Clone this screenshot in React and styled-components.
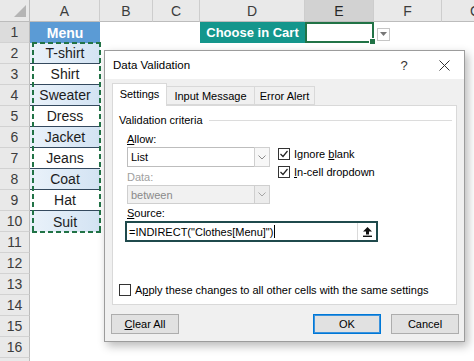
import React from "react";
import styled, { createGlobalStyle, css } from "styled-components";

const GlobalStyle = createGlobalStyle`
  html, body { margin: 0; padding: 0; background: #fff; }
  body { font-family: "Liberation Sans", Arial, sans-serif; }
`;

const Screen = styled.div`
  position: relative;
  width: 474px;
  height: 361px;
  overflow: hidden;
  background: #fff;
`;

/* ---------- spreadsheet ---------- */

const Sheet = styled.div`
  display: grid;
  grid-template-columns: 30px 70px 53px 47px 105px 69px 68px 68px;
  grid-template-rows: 22px repeat(17, 21px);
  font-size: 14px;
  color: #222;
`;

// every sheet cell sits at its own row/column so the copy marquee can overlap
const at = css`
  grid-row: ${(p) => p.$r};
  grid-column: ${(p) => p.$c};
`;

const Corner = styled.div`
  ${at}
  background: #e9e9e9;
  border-right: 1px solid #bcbcbc;
  border-bottom: 1px solid #bcbcbc;
  box-sizing: border-box;
  display: flex;
  align-items: flex-end;
  justify-content: flex-end;
  padding: 0 3px 4px 0;
`;

const ColHead = styled.div`
  ${at}
  display: flex;
  align-items: center;
  justify-content: center;
  box-sizing: border-box;
  background: ${(p) => (p.$active ? "#d2d2d2" : "#e9e9e9")};
  color: ${(p) => (p.$active ? "#262626" : "#3c3c3c")};
  border-right: 1px solid #cdcdcd;
  border-bottom: 1px solid #bcbcbc;
`;

const RowHead = styled.div`
  ${at}
  display: flex;
  align-items: center;
  justify-content: center;
  box-sizing: border-box;
  background: ${(p) => (p.$active ? "#dcdcdc" : "#e9e9e9")};
  color: #3c3c3c;
  border-right: 1px solid #bcbcbc;
  border-bottom: 1px solid #d2d2d2;
`;

const Blank = styled.div`
  ${at}
  background: #fff;
  display: flex;
  align-items: center;
`;

const MenuHead = styled.div`
  ${at}
  background: #5b9bd5;
  color: #fff;
  font-weight: bold;
  display: flex;
  align-items: center;
  justify-content: center;
`;

const Item = styled.div`
  ${at}
  display: flex;
  align-items: center;
  justify-content: center;
  box-sizing: border-box;
  background: ${(p) =>
    p.$band ? "linear-gradient(90deg, #eaf2fa, #d3e3f3)" : "#fff"};
  border-bottom: ${(p) => (p.$last ? "none" : "1px solid #34495e")};
  color: #1c1c1c;
`;

const TitleCell = styled.div`
  ${at}
  background: #14968c;
  color: #fff;
  font-weight: bold;
  font-size: 13px;
  display: flex;
  align-items: center;
  justify-content: center;
`;

const SelectedCell = styled.div`
  ${at}
  position: relative;
  box-sizing: border-box;
  border: 2px solid #217346;
  background: #fff;
  &::after {
    content: "";
    position: absolute;
    right: -4px;
    bottom: -4px;
    width: 5px;
    height: 5px;
    background: #217346;
    border: 1px solid #fff;
  }
`;

const DropButton = styled.div`
  margin: 3px 0 0 3px;
  width: 13px;
  height: 13px;
  box-sizing: border-box;
  border: 1px solid #c6c6c6;
  background: #fff;
  display: flex;
  align-items: center;
  justify-content: center;
`;

const Ants = styled.div`
  grid-column: 2 / 3;
  grid-row: 3 / 12;
  margin: -1px -1px -1px 2px;
  pointer-events: none;
  background:
    linear-gradient(90deg, #217346 62%, transparent 0) top left / 8px 2px repeat-x,
    linear-gradient(90deg, #217346 62%, transparent 0) bottom left / 8px 2px repeat-x,
    linear-gradient(180deg, #217346 62%, transparent 0) top left / 2px 8px repeat-y,
    linear-gradient(180deg, #217346 62%, transparent 0) top right / 2px 8px repeat-y;
`;

/* ---------- dialog ---------- */

const Dialog = styled.div`
  position: absolute;
  left: 104px;
  top: 50px;
  width: 361px;
  height: 292px;
  box-sizing: border-box;
  background: #f0f0f0;
  border: 1px solid #9c9c9c;
  box-shadow: 3px 4px 9px rgba(0, 0, 0, 0.28);
  display: flex;
  flex-direction: column;
  font-family: "Liberation Sans", Arial, sans-serif;
  font-size: 11px;
  color: #000;
`;

const TitleBar = styled.div`
  height: 28px;
  background: #fff;
  display: flex;
  align-items: center;
  padding-left: 8px;
  font-size: 11.5px;
`;

const TitleText = styled.div`
  flex: 1;
`;

const TitleButton = styled.div`
  width: 40px;
  height: 28px;
  display: flex;
  align-items: center;
  justify-content: center;
  font-size: 13px;
  color: #333;
`;

const Body = styled.div`
  padding: 4px 7px 0 7px;
  display: flex;
  flex-direction: column;
`;

const TabRow = styled.div`
  display: flex;
  align-items: flex-end;
  height: 22px;
  position: relative;
  z-index: 1;
`;

const Tab = styled.div`
  width: ${(p) => p.$w}px;
  height: ${(p) => (p.$active ? 23 : 19)}px;
  box-sizing: border-box;
  display: flex;
  align-items: center;
  justify-content: center;
  padding-bottom: ${(p) => (p.$active ? 2 : 0)}px;
  background: ${(p) => (p.$active ? "#fff" : "#f0f0f0")};
  border: 1px solid #d9d9d9;
  border-bottom: ${(p) => (p.$active ? "none" : "1px solid #d9d9d9")};
  margin-bottom: ${(p) => (p.$active ? -1 : 0)}px;
  margin-left: ${(p) => (p.$active ? 0 : -1)}px;
`;

const Page = styled.div`
  height: 200px;
  box-sizing: border-box;
  background: #fff;
  border: 1px solid #d9d9d9;
  display: flex;
  flex-direction: column;
`;

const GroupHead = styled.div`
  display: flex;
  align-items: center;
  margin: 7px 4px 0 6px;
  height: 14px;
  &::after {
    content: "";
    flex: 1;
    height: 1px;
    background: #dcdcdc;
    margin-left: 6px;
  }
`;

const Criteria = styled.div`
  display: grid;
  grid-template-columns: 143px auto;
  column-gap: 8px;
  margin: 5px 0 0 14px;
`;

const Column = styled.div`
  display: flex;
  flex-direction: column;
`;

const Label = styled.div`
  height: 14px;
  line-height: 14px;
  margin-top: ${(p) => p.$mt || 0}px;
  color: ${(p) => (p.$disabled ? "#a0a0a0" : "#000")};
`;

const Combo = styled.div`
  height: ${(p) => p.$h}px;
  margin-top: 1px;
  box-sizing: border-box;
  border: 1px solid ${(p) => (p.$disabled ? "#cfcfcf" : "#bdbdbd")};
  background: ${(p) => (p.$disabled ? "#f1f1f1" : "#fff")};
  color: ${(p) => (p.$disabled ? "#8a8a8a" : "#000")};
  display: flex;
  align-items: center;
  padding-left: 3px;
`;

const ComboText = styled.div`
  flex: 1;
`;

const ComboArrow = styled.div`
  width: 16px;
  align-self: stretch;
  margin: -1px -1px -1px 0;
  box-sizing: border-box;
  border: 1px solid #cfcfcf;
  background: ${(p) => (p.$disabled ? "#ececec" : "#f7f7f7")};
  display: flex;
  align-items: center;
  justify-content: center;
`;

const SourceBox = styled.div`
  width: 253px;
  height: 21px;
  margin: 1px 0 0 -2px;
  box-sizing: border-box;
  border: 2px solid #1f4a4c;
  display: flex;
  align-items: center;
  padding-left: 2px;
  background: #fff;
`;

const Caret = styled.span`
  display: inline-block;
  width: 1px;
  height: 13px;
  background: #000;
  margin-left: 1px;
  vertical-align: -2px;
`;

const PickButton = styled.div`
  width: 18px;
  align-self: stretch;
  border-left: 1px solid #dadada;
  display: flex;
  align-items: center;
  justify-content: center;
`;

const Checks = styled.div`
  display: flex;
  flex-direction: column;
  gap: 4px;
  padding-top: 15px;
`;

const CheckRow = styled.div`
  display: flex;
  align-items: center;
  gap: 4px;
  height: 14px;
`;

const Box = styled.div`
  width: 12px;
  height: 12px;
  box-sizing: border-box;
  border: 1px solid #333;
  background: #fff;
  display: flex;
  align-items: center;
  justify-content: center;
`;

const ApplyRow = styled(CheckRow)`
  margin: auto 0 7px 6px;
`;

const Footer = styled.div`
  display: flex;
  align-items: center;
  padding: 9px 5px 0 6px;
  gap: 10px;
`;

const Button = styled.div`
  width: 68px;
  height: 20px;
  box-sizing: border-box;
  display: flex;
  align-items: center;
  justify-content: center;
  background: #e1e1e1;
  border: 1px solid ${(p) => (p.$primary ? "#0078d7" : "#adadad")};
  box-shadow: ${(p) => (p.$primary ? "inset 0 0 0 1px #3b93dd" : "none")};
  margin-right: ${(p) => (p.$push ? "auto" : "0")};
`;

const Chevron = ({ color = "#8a8a8a" }) => (
  <svg width="8" height="5" viewBox="0 0 8 5">
    <polyline points="0.5,0.5 4,4 7.5,0.5" fill="none" stroke={color} strokeWidth="1" />
  </svg>
);

const Tick = () => (
  <svg width="10" height="10" viewBox="0 0 10 10">
    <polyline points="1.5,5 4,7.5 8.5,2" fill="none" stroke="#222" strokeWidth="1.2" />
  </svg>
);

const menu = ["T-shirt", "Shirt", "Sweater", "Dress", "Jacket", "Jeans", "Coat", "Hat", "Suit"];
const cols = ["A", "B", "C", "D", "E", "F", "G"];

function renderRow(r) {
  const gr = r + 1;
  const cells = [
    <RowHead key={`h${r}`} $r={gr} $c={1} $active={r === 1}>
      {r}
    </RowHead>,
  ];
  if (r === 1) {
    cells.push(<MenuHead key={`a${r}`} $r={gr} $c={2}>Menu</MenuHead>);
  } else if (r <= 10) {
    cells.push(
      <Item key={`a${r}`} $r={gr} $c={2} $band={r % 2 === 0} $last={r === 10}>
        {menu[r - 2]}
      </Item>
    );
  } else {
    cells.push(<Blank key={`a${r}`} $r={gr} $c={2} />);
  }
  cells.push(<Blank key={`b${r}`} $r={gr} $c={3} />, <Blank key={`c${r}`} $r={gr} $c={4} />);
  cells.push(
    r === 1 ? (
      <TitleCell key={`d${r}`} $r={gr} $c={5}>
        Choose in Cart
      </TitleCell>
    ) : (
      <Blank key={`d${r}`} $r={gr} $c={5} />
    )
  );
  cells.push(
    r === 1 ? (
      <SelectedCell key={`e${r}`} $r={gr} $c={6} />
    ) : (
      <Blank key={`e${r}`} $r={gr} $c={6} />
    )
  );
  cells.push(
    <Blank key={`f${r}`} $r={gr} $c={7}>
      {r === 1 && (
        <DropButton>
          <svg width="7" height="4" viewBox="0 0 7 4">
            <polygon points="0,0 7,0 3.5,4" fill="#777" />
          </svg>
        </DropButton>
      )}
    </Blank>
  );
  cells.push(<Blank key={`g${r}`} $r={gr} $c={8} />);
  return cells;
}

export default function App() {
  return (
    <Screen>
      <GlobalStyle />
      <Sheet>
        <Corner $r={1} $c={1}>
          <svg width="12" height="12" viewBox="0 0 12 12">
            <polygon points="12,0 12,12 0,12" fill="#b5b5b5" />
          </svg>
        </Corner>
        {cols.map((c, i) => (
          <ColHead key={c} $r={1} $c={i + 2} $active={c === "E"}>
            {c}
          </ColHead>
        ))}
        {Array.from({ length: 17 }, (_, i) => renderRow(i + 1))}
        <Ants />
      </Sheet>

      <Dialog>
        <TitleBar>
          <TitleText>Data Validation</TitleText>
          <TitleButton>?</TitleButton>
          <TitleButton>
            <svg width="11" height="11" viewBox="0 0 11 11">
              <path d="M0.5 0.5 L10.5 10.5 M10.5 0.5 L0.5 10.5" stroke="#333" strokeWidth="1" />
            </svg>
          </TitleButton>
        </TitleBar>
        <Body>
          <TabRow>
            <Tab $w={55} $active>Settings</Tab>
            <Tab $w={89}>Input Message</Tab>
            <Tab $w={61}>Error Alert</Tab>
          </TabRow>
          <Page>
            <GroupHead>Validation criteria</GroupHead>
            <Criteria>
              <Column>
                <Label>
                  <u>A</u>llow:
                </Label>
                <Combo $h={20}>
                  <ComboText>List</ComboText>
                  <ComboArrow>
                    <Chevron />
                  </ComboArrow>
                </Combo>
                <Label $mt={3} $disabled>
                  Data:
                </Label>
                <Combo $h={19} $disabled>
                  <ComboText>between</ComboText>
                  <ComboArrow $disabled>
                    <Chevron color="#a5a5a5" />
                  </ComboArrow>
                </Combo>
                <Label $mt={2}>
                  <u>S</u>ource:
                </Label>
                <SourceBox>
                  <ComboText>
                    =INDIRECT("Clothes[Menu]")
                    <Caret />
                  </ComboText>
                  <PickButton>
                    <svg width="9" height="10" viewBox="0 0 9 10">
                      <polygon points="4.5,0 9,4.5 6,4.5 6,7.5 3,7.5 3,4.5 0,4.5" fill="#111" />
                      <rect x="0" y="8.6" width="9" height="1.4" fill="#111" />
                    </svg>
                  </PickButton>
                </SourceBox>
              </Column>
              <Checks>
                <CheckRow>
                  <Box>
                    <Tick />
                  </Box>
                  <span>
                    Ignore <u>b</u>lank
                  </span>
                </CheckRow>
                <CheckRow>
                  <Box>
                    <Tick />
                  </Box>
                  <span>
                    <u>I</u>n-cell dropdown
                  </span>
                </CheckRow>
              </Checks>
            </Criteria>
            <ApplyRow>
              <Box />
              <span>
                A<u>p</u>ply these changes to all other cells with the same settings
              </span>
            </ApplyRow>
          </Page>
        </Body>
        <Footer>
          <Button $push>
            <span>
              <u>C</u>lear All
            </span>
          </Button>
          <Button $primary>OK</Button>
          <Button>Cancel</Button>
        </Footer>
      </Dialog>
    </Screen>
  );
}
